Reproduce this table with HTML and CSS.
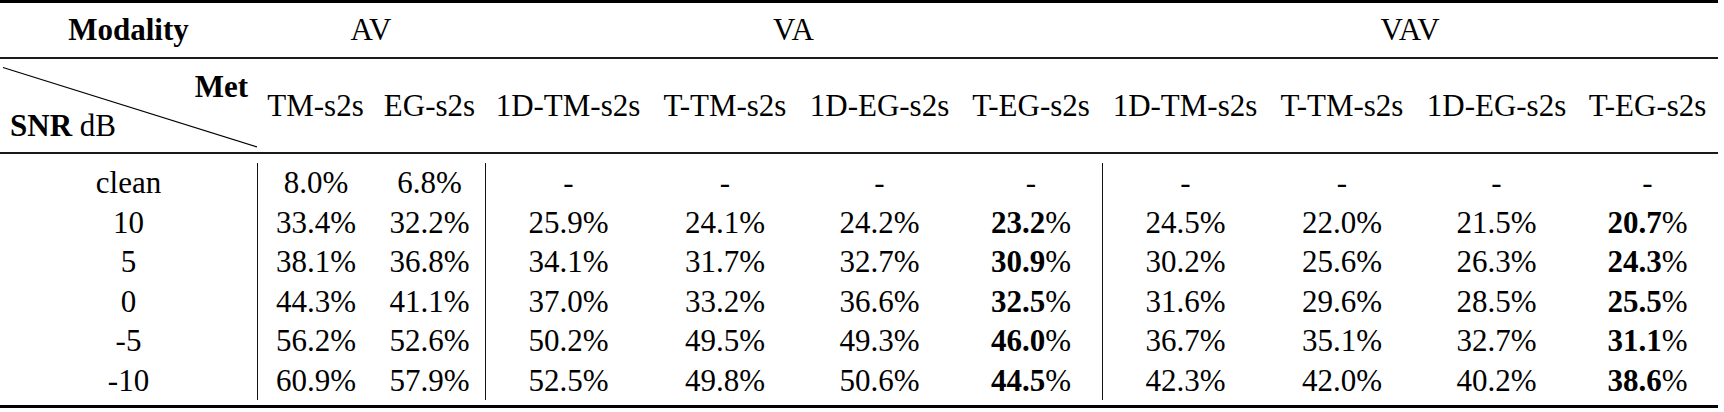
FILE: index.html
```html
<!DOCTYPE html>
<html lang="en">
<head>
<meta charset="utf-8">
<title>Results table</title>
<link rel="stylesheet" href="styles.css">
</head>
<body>
<div class="tbl">
  <div class="rule thick"></div>

  <div class="c h1"><b>Modality</b></div>
  <div class="c h1 span2">AV</div>
  <div class="c h1 span4">VA</div>
  <div class="c h1 span4">VAV</div>

  <div class="rule thin"></div>

  <div class="diag">
    <svg class="diag-line" width="257" height="93" viewBox="0 0 257 93" aria-hidden="true"><line x1="3" y1="8.5" x2="257" y2="88" stroke="#000" stroke-width="1.3"/></svg>
    <div class="met"><b>Met</b></div>
    <div class="snr"><b>SNR</b> dB</div>
  </div>
  <div class="c h2">TM-s2s</div>
  <div class="c h2">EG-s2s</div>
  <div class="c h2">1D-TM-s2s</div>
  <div class="c h2">T-TM-s2s</div>
  <div class="c h2">1D-EG-s2s</div>
  <div class="c h2">T-EG-s2s</div>
  <div class="c h2">1D-TM-s2s</div>
  <div class="c h2">T-TM-s2s</div>
  <div class="c h2">1D-EG-s2s</div>
  <div class="c h2">T-EG-s2s</div>

  <div class="rule thin"></div>
  <div class="spacer"></div>

  <div class="c">clean</div>
  <div class="c d vl">8.0%</div><div class="c d">6.8%</div>
  <div class="c d vl">-</div><div class="c d">-</div><div class="c d">-</div><div class="c d">-</div>
  <div class="c d vl">-</div><div class="c d">-</div><div class="c d">-</div><div class="c d">-</div>

  <div class="c">10</div>
  <div class="c d vl">33.4%</div><div class="c d">32.2%</div>
  <div class="c d vl">25.9%</div><div class="c d">24.1%</div><div class="c d">24.2%</div><div class="c d"><b>23.2</b>%</div>
  <div class="c d vl">24.5%</div><div class="c d">22.0%</div><div class="c d">21.5%</div><div class="c d"><b>20.7</b>%</div>

  <div class="c">5</div>
  <div class="c d vl">38.1%</div><div class="c d">36.8%</div>
  <div class="c d vl">34.1%</div><div class="c d">31.7%</div><div class="c d">32.7%</div><div class="c d"><b>30.9</b>%</div>
  <div class="c d vl">30.2%</div><div class="c d">25.6%</div><div class="c d">26.3%</div><div class="c d"><b>24.3</b>%</div>

  <div class="c">0</div>
  <div class="c d vl">44.3%</div><div class="c d">41.1%</div>
  <div class="c d vl">37.0%</div><div class="c d">33.2%</div><div class="c d">36.6%</div><div class="c d"><b>32.5</b>%</div>
  <div class="c d vl">31.6%</div><div class="c d">29.6%</div><div class="c d">28.5%</div><div class="c d"><b>25.5</b>%</div>

  <div class="c">-5</div>
  <div class="c d vl">56.2%</div><div class="c d">52.6%</div>
  <div class="c d vl">50.2%</div><div class="c d">49.5%</div><div class="c d">49.3%</div><div class="c d"><b>46.0</b>%</div>
  <div class="c d vl">36.7%</div><div class="c d">35.1%</div><div class="c d">32.7%</div><div class="c d"><b>31.1</b>%</div>

  <div class="c">-10</div>
  <div class="c d vl">60.9%</div><div class="c d">57.9%</div>
  <div class="c d vl">52.5%</div><div class="c d">49.8%</div><div class="c d">50.6%</div><div class="c d"><b>44.5</b>%</div>
  <div class="c d vl">42.3%</div><div class="c d">42.0%</div><div class="c d">40.2%</div><div class="c d"><b>38.6</b>%</div>

  <div class="spacer"></div>
  <div class="rule thick"></div>
</div>
</body>
</html>
```

FILE: styles.css
```css
html, body {
  margin: 0;
  padding: 0;
  background: #fff;
}

body {
  font-family: "Liberation Serif", "Noto Serif", "FreeSerif", "Nimbus Roman No9 L", "Nimbus Roman", "Times New Roman", Times, "DejaVu Serif", Georgia, serif;
  font-size: 31px;
  color: #000;
}

.tbl {
  display: grid;
  width: 1718px;
  grid-template-columns: 257px 117px 111px 166px 148px 161px 142px 166px 148px 161px 141px;
  grid-template-rows: 3px 54px 2px 93px 2px 9px repeat(6, 39.5px) 5px 3px;
}

.rule {
  grid-column: 1 / -1;
  background: #000;
}

.rule.thin {
  background: #1a1a1a;
}

.spacer {
  grid-column: 1 / -1;
}

.c {
  display: flex;
  align-items: center;
  justify-content: center;
  white-space: nowrap;
  line-height: 1;
}

.h1 {
  padding-bottom: 1px;
}

.span2 { grid-column: span 2; }
.span4 { grid-column: span 4; }

.d.vl {
  border-left: 1px solid #111;
}

.diag {
  position: relative;
  display: flex;
  flex-direction: column;
  padding-top: 12px;
  row-gap: 8px;
  line-height: 31px;
}

.diag-line {
  position: absolute;
  left: 0;
  top: 0;
}

.met {
  text-align: right;
  padding-right: 9px;
}

.snr {
  padding-left: 10px;
}
```
